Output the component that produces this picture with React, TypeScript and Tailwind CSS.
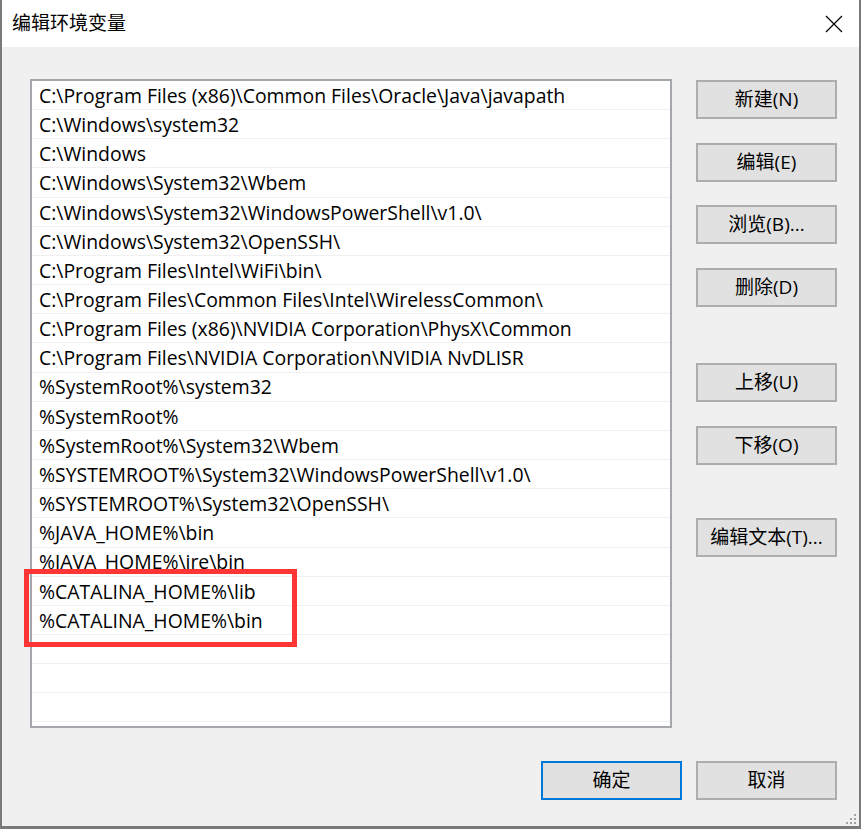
import React from 'react';

const paths = [
  'C:\\Program Files (x86)\\Common Files\\Oracle\\Java\\javapath',
  'C:\\Windows\\system32',
  'C:\\Windows',
  'C:\\Windows\\System32\\Wbem',
  'C:\\Windows\\System32\\WindowsPowerShell\\v1.0\\',
  'C:\\Windows\\System32\\OpenSSH\\',
  'C:\\Program Files\\Intel\\WiFi\\bin\\',
  'C:\\Program Files\\Common Files\\Intel\\WirelessCommon\\',
  'C:\\Program Files (x86)\\NVIDIA Corporation\\PhysX\\Common',
  'C:\\Program Files\\NVIDIA Corporation\\NVIDIA NvDLISR',
  '%SystemRoot%\\system32',
  '%SystemRoot%',
  '%SystemRoot%\\System32\\Wbem',
  '%SYSTEMROOT%\\System32\\WindowsPowerShell\\v1.0\\',
  '%SYSTEMROOT%\\System32\\OpenSSH\\',
  '%JAVA_HOME%\\bin',
  '%JAVA_HOME%\\jre\\bin',
  '%CATALINA_HOME%\\lib',
  '%CATALINA_HOME%\\bin',
  '',
  '',
  '',
];

const uiFont = { fontFamily: '"Open Sans", "Noto Sans CJK SC", sans-serif' };

const Button: React.FC<{ label: string; primary?: boolean; className?: string }> = ({
  label,
  primary,
  className = '',
}) => (
  <button
    type="button"
    className={`h-[39px] w-[141px] bg-[#e1e1e1] text-[19px] text-black ${
      primary ? 'border-2 border-[#0078d7]' : 'border-2 border-[#adadad]'
    } ${className}`}
    style={uiFont}
  >
    {label}
  </button>
);

export default function App() {
  return (
    <div className="w-[861px] h-[829px] bg-white">
      <div className="flex h-full flex-col border-x-2 border-b-[3px] border-[#7a7a7a] bg-[#f0f0f0]">
        {/* title bar */}
        <div className="flex h-[47px] items-center justify-between bg-white pl-[10px] pr-[16px]">
          <span className="text-[19px] text-black" style={uiFont}>
            编辑环境变量
          </span>
          <svg width="18" height="18" viewBox="0 0 18 18" className="text-black">
            <path d="M1 1L17 17M17 1L1 17" stroke="currentColor" strokeWidth="1.2" />
          </svg>
        </div>

        <div className="flex gap-[24px] pl-[28px] pt-[32px]">
          {/* path list */}
          <div className="relative h-[649px] w-[642px] border-2 border-[#a4a7ab] bg-white">
            {paths.map((p, i) => (
              <div
                key={i}
                className="flex h-[29.17px] items-center border-b border-[#f0f0f0] pl-[7px] pt-[1px] text-[19.4px] leading-none text-black whitespace-nowrap"
                style={uiFont}
              >
                {p}
              </div>
            ))}
            <div className="absolute left-[-8px] top-[488px] h-[78px] w-[273px] border-[5px] border-[#fe3535]" />
          </div>

          {/* action buttons */}
          <div className="flex flex-col pt-[1px]">
            <Button label="新建(N)" />
            <Button label="编辑(E)" className="mt-[24px]" />
            <Button label="浏览(B)..." className="mt-[23px]" />
            <Button label="删除(D)" className="mt-[24px]" />
            <Button label="上移(U)" className="mt-[56px]" />
            <Button label="下移(O)" className="mt-[24px]" />
            <Button label="编辑文本(T)..." className="mt-[53px]" />
          </div>
        </div>

        <div className="relative flex flex-1 justify-end gap-[14px] pr-[22px] pt-[33px]">
          <Button label="确定" primary />
          <Button label="取消" />
          {/* size grip */}
          <svg width="12" height="12" viewBox="0 0 12 12" className="absolute bottom-[1px] right-[2px]">
            {[
              [10, 2],
              [10, 6],
              [6, 6],
              [10, 10],
              [6, 10],
              [2, 10],
            ].map(([x, y]) => (
              <rect key={`${x}-${y}`} x={x - 1} y={y - 1} width="2" height="2" fill="#a0a0a0" />
            ))}
          </svg>
        </div>
      </div>
    </div>
  );
}
